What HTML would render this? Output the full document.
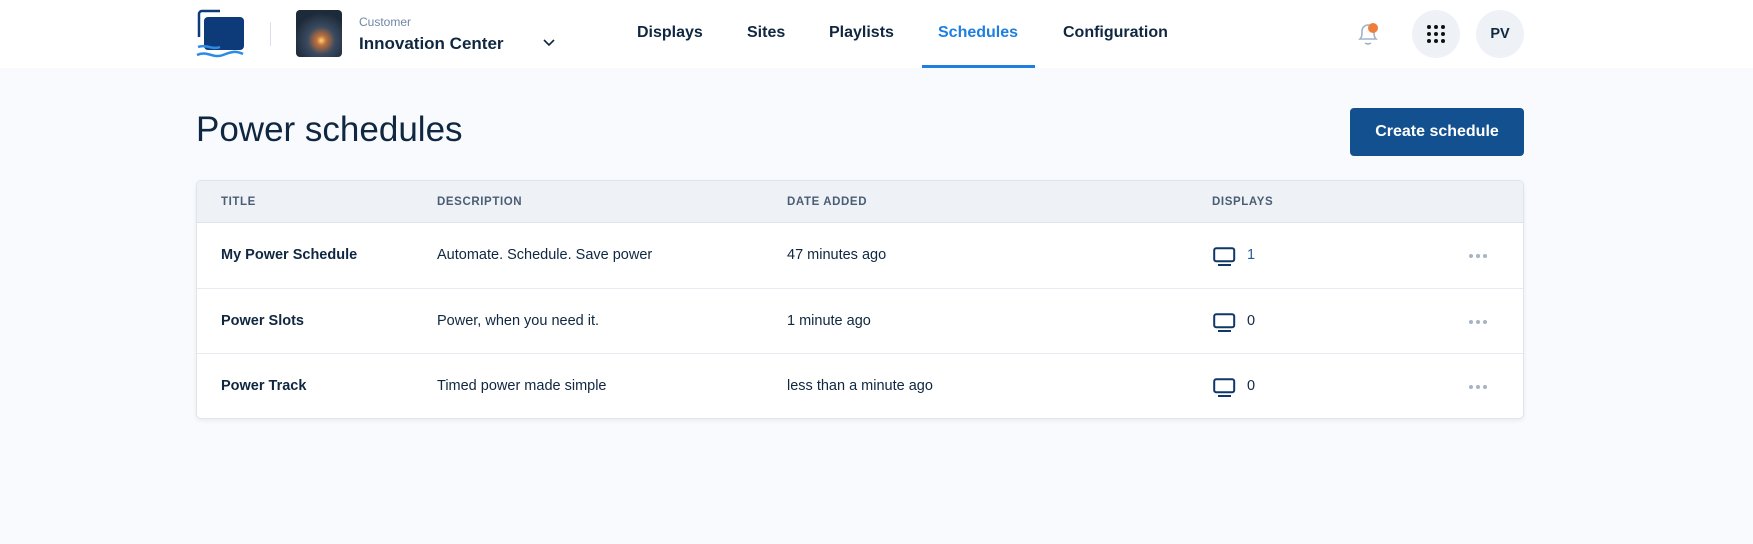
<!DOCTYPE html>
<html><head><style>
*{margin:0;padding:0;box-sizing:border-box}
body{width:1753px;height:544px;background:#f8fafd;font-family:"Liberation Sans",sans-serif;color:#0f2740;position:relative;overflow:hidden}
.hdr{position:absolute;left:0;top:0;width:1753px;height:68px;background:#fff}
.abs{position:absolute}
.nav{position:absolute;top:24px;font-size:16px;font-weight:bold;color:#0f2740}
.th{position:absolute;top:15px;font-size:11.5px;font-weight:bold;color:#4a5d73;letter-spacing:.6px}
.row{position:absolute;left:0;width:1327px;height:65px;border-top:1px solid #e6ebf1;font-size:14.5px}
.row span{position:absolute;top:24px}
.dots{position:absolute;left:1272px;top:31px;width:20px;height:4px}
.dots i{position:absolute;top:0;width:4px;height:4px;border-radius:50%;background:#a8b4c4}
</style></head><body>
<div class="hdr">
 <svg class="abs" style="left:196px;top:9px" width="52" height="50" viewBox="0 0 52 50">
  <path d="M3 28V5a3 3 0 0 1 3-3h18" fill="none" stroke="#0d3b7a" stroke-width="2.5"/>
  <rect x="8" y="8" width="40" height="33" rx="4" fill="#0d3b7a"/>
  <path d="M2 38c8-3 14 3 22 0" fill="none" stroke="#2d8be6" stroke-width="2.5"/>
  <path d="M1 46c10-5 16 4 26 0s14-4 20-1" fill="none" stroke="#2d8be6" stroke-width="2.5"/>
 </svg>
 <div class="abs" style="left:270px;top:22px;width:1px;height:24px;background:#d9e0e8"></div>
 <div class="abs" style="left:296px;top:10px;width:46px;height:47px;border-radius:4px;background:radial-gradient(circle at 55% 65%,#ffd27a 0,#c0703a 12%,#3a4a60 35%,#1d2a3a 70%)"></div>
 <div class="abs" style="left:359px;top:15px;font-size:12px;color:#6f87a3">Customer</div>
 <div class="abs" style="left:359px;top:34px;font-size:17px;font-weight:bold;color:#0f2740">Innovation Center</div>
 <svg class="abs" style="left:543px;top:39px" width="12" height="8"><path d="M1 1l5 5 5-5" fill="none" stroke="#0f2740" stroke-width="1.6"/></svg>
 <div class="nav" style="left:637px">Displays</div>
 <div class="nav" style="left:747px">Sites</div>
 <div class="nav" style="left:829px">Playlists</div>
 <div class="nav" style="left:938px;color:#1e7fe0">Schedules</div>
 <div class="nav" style="left:1063px">Configuration</div>
 <div class="abs" style="left:922px;top:65px;width:113px;height:3px;background:#1e7fe0"></div>
 <svg class="abs" style="left:1357px;top:22px" width="22" height="24" viewBox="0 0 22 24"><path d="M3 17c2-2 2-4 2-8a6 6 0 0 1 12 0c0 4 0 6 2 8z" fill="none" stroke="#a3b3c7" stroke-width="1.6"/><path d="M8 21q3 2 6 0" fill="none" stroke="#a3b3c7" stroke-width="1.6"/></svg>
 <div class="abs" style="left:1368px;top:23px;width:10px;height:10px;border-radius:50%;background:#ef7d3c"></div>
 <div class="abs" style="left:1412px;top:10px;width:48px;height:48px;border-radius:50%;background:#eef2f7"></div>
 <svg class="abs" style="left:1426px;top:24px" width="20" height="20"><g fill="#111"><circle cx="3" cy="3" r="2"/><circle cx="10" cy="3" r="2"/><circle cx="17" cy="3" r="2"/><circle cx="3" cy="10" r="2"/><circle cx="10" cy="10" r="2"/><circle cx="17" cy="10" r="2"/><circle cx="3" cy="17" r="2"/><circle cx="10" cy="17" r="2"/><circle cx="17" cy="17" r="2"/></g></svg>
 <div class="abs" style="left:1476px;top:10px;width:48px;height:48px;border-radius:50%;background:#eef2f7;text-align:center;line-height:48px;font-size:14.5px;font-weight:bold;color:#0f2740">PV</div>
</div>
<div class="abs" style="left:196px;top:110px;font-size:35px;color:#0f2740">Power schedules</div>
<div class="abs" style="left:1350px;top:108px;width:174px;height:48px;border-radius:4px;background:#13508f;color:#fff;font-size:16px;font-weight:bold;text-align:center;line-height:48px">Create schedule</div>
<div class="abs" style="left:196px;top:180px;width:1328px;height:239px;background:#fff;border:1px solid #dfe5ec;border-radius:5px;box-shadow:0 2px 4px rgba(0,0,0,.06);overflow:hidden">
 <div class="abs" style="left:0;top:0;width:1328px;height:42px;background:#eef2f7;border-bottom:1px solid #dfe5ec">
  <div class="th" style="left:24px">TITLE</div><div class="th" style="left:240px">DESCRIPTION</div><div class="th" style="left:590px">DATE ADDED</div><div class="th" style="left:1015px">DISPLAYS</div>
 </div>
 <div class="row" style="top:42px;border-top:none"><span style="left:24px;font-weight:bold">My Power Schedule</span><span style="left:240px">Automate. Schedule. Save power</span><span style="left:590px">47 minutes ago</span>
  <svg class="abs" style="left:1016px;top:24px" width="23" height="20"><rect x="1.2" y="1.2" width="20" height="13" rx="2" fill="none" stroke="#0f3866" stroke-width="2"/><rect x="5" y="17" width="13" height="2" fill="#0f3866"/></svg><span style="left:1050px;color:#1f5f9a">1</span><div class="dots"><i style="left:0"></i><i style="left:7px"></i><i style="left:14px"></i></div></div>
 <div class="row" style="top:107px"><span style="left:24px;font-weight:bold">Power Slots</span><span style="left:240px">Power, when you need it.</span><span style="left:590px">1 minute ago</span>
  <svg class="abs" style="left:1016px;top:24px" width="23" height="20"><rect x="1.2" y="1.2" width="20" height="13" rx="2" fill="none" stroke="#0f3866" stroke-width="2"/><rect x="5" y="17" width="13" height="2" fill="#0f3866"/></svg><span style="left:1050px">0</span><div class="dots"><i style="left:0"></i><i style="left:7px"></i><i style="left:14px"></i></div></div>
 <div class="row" style="top:172px"><span style="left:24px;font-weight:bold">Power Track</span><span style="left:240px">Timed power made simple</span><span style="left:590px">less than a minute ago</span>
  <svg class="abs" style="left:1016px;top:24px" width="23" height="20"><rect x="1.2" y="1.2" width="20" height="13" rx="2" fill="none" stroke="#0f3866" stroke-width="2"/><rect x="5" y="17" width="13" height="2" fill="#0f3866"/></svg><span style="left:1050px">0</span><div class="dots"><i style="left:0"></i><i style="left:7px"></i><i style="left:14px"></i></div></div>
</div>
</body></html>
